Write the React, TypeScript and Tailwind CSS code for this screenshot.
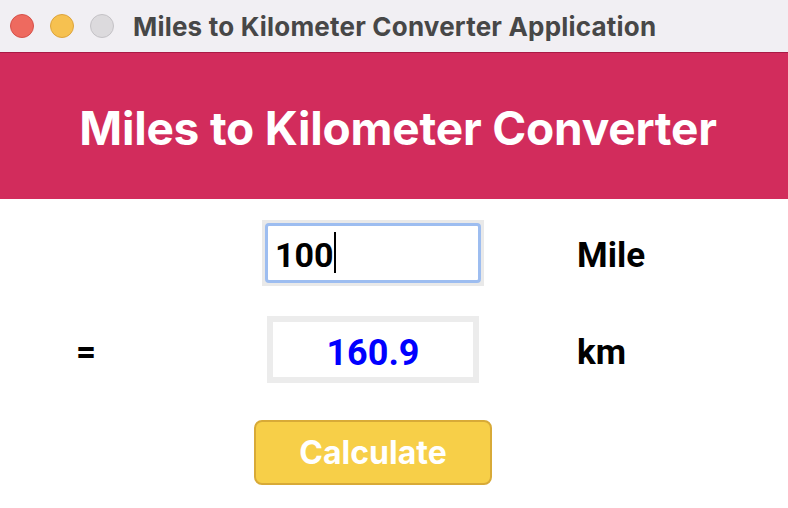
import { useState } from "react";

// Miles -> km converter window (mac style title bar)
export default function App() {
  const [miles, setMiles] = useState("100");
  const [km, setKm] = useState("160.9");

  const calcular = () => {
    const n = parseFloat(miles);
    setKm(isNaN(n) ? "" : (n * 1.609).toFixed(1));
  };

  return (
    <div className="w-[788px] h-[508px] bg-white overflow-hidden flex flex-col">
      {/* Title bar */}
      <div className="h-[53px] shrink-0 bg-[#f1eff3] flex items-center border-b border-[#a91a45]">
        <div className="flex items-center gap-4 pl-[10px]">
          <span className="w-6 h-6 rounded-full bg-[#ee6a5f] border border-[#d6514a]" />
          <span className="w-6 h-6 rounded-full bg-[#f6c150] border border-[#dda43c]" />
          <span className="w-6 h-6 rounded-full bg-[#dcdadd] border border-[#c4c2c6]" />
        </div>
        <p className="ml-[19px] text-[26px] font-bold text-[#474747] font-['Inter',sans-serif] tracking-[0.2px]">
          Miles to Kilometer Converter Application
        </p>
      </div>

      {/* Header */}
      <div className="h-[146px] shrink-0 bg-[#d22c5c] flex items-center justify-center pt-[4px] pl-[8px]">
        <h1 className="text-[46px] font-bold text-white font-['Inter',sans-serif] tracking-[-0.2px]">
          Miles to Kilometer Converter
        </h1>
      </div>

      {/* Body */}
      <div className="grid grid-cols-[254px_238px_1fr] pt-[21px] items-center font-['Roboto',sans-serif] font-bold">
        <div />
        <div className="justify-self-center w-[222px] h-[66px] border-[3px] border-[#e9e9e9] bg-[#e9e9e9]">
          <div className="relative w-full h-full rounded-[4px] border-[3px] border-[#9dbdf0] bg-white flex items-center pl-[7px] pt-[3px]">
            <input
              value={miles}
              onChange={(e) => setMiles(e.target.value)}
              className="w-full outline-none bg-transparent text-[34px] text-black font-bold font-['Roboto',sans-serif] leading-none caret-transparent"
            />
            {/* text cursor */}
            <span className="absolute left-[66px] top-[6px] w-[2px] h-[41px] bg-black" />
          </div>
        </div>
        <p className="pl-[85px] pt-[5px] text-[35px] text-black leading-none">Mile</p>

        <p className="pl-[76px] pt-[6px] mt-[30px] text-[35px] text-black leading-none">=</p>
        <div className="justify-self-center mt-[30px] w-[212px] h-[67px] border-[6px] border-[#ececec] bg-white flex items-center justify-center pt-[7px]">
          <span className="text-[36px] text-[#0000ff] leading-none">{km}</span>
        </div>
        <p className="pl-[85px] pt-[6px] mt-[30px] text-[35px] text-black leading-none">km</p>

        <div />
        <button
          onClick={calcular}
          className="mt-[37px] w-[238px] h-[65px] rounded-[8px] bg-[#f7cf48] border-2 border-[#d8aa37] text-white text-[32px] font-bold font-['Inter',sans-serif]"
        >
          Calculate
        </button>
        <div />
      </div>
    </div>
  );
}
